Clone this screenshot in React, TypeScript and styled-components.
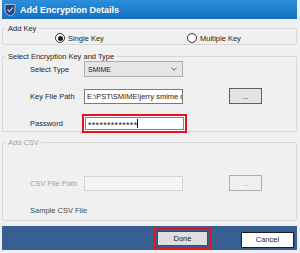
import React from 'react';
import styled, { createGlobalStyle } from 'styled-components';

const GlobalStyle = createGlobalStyle`
  html, body {
    margin: 0;
    padding: 0;
    background: #ececec;
  }
  * {
    box-sizing: border-box;
  }
`;

const Window = styled.div`
  width: 300px;
  height: 253px;
  padding: 0 3px 2px 2px;
  background: #f0f0f0;
  display: flex;
  flex-direction: column;
  font-family: 'Liberation Sans', Arial, sans-serif;
  font-size: 7.5px;
  color: #1e1e1e;
  overflow: hidden;
`;

const TitleBar = styled.div`
  flex: none;
  height: 19px;
  display: flex;
  align-items: center;
  gap: 4px;
  padding-left: 2px;
  background: linear-gradient(to bottom, #2b8fdb, #1670c0);
  color: #ffffff;
  font-size: 9px;
  font-weight: bold;
`;

const Body = styled.div`
  flex: 1;
  display: flex;
  flex-direction: column;
`;

const Group = styled.fieldset<{ $top: number; $bottomPad: number }>`
  flex: none;
  margin: ${(p) => p.$top}px 0 0 0;
  padding: 0 0 ${(p) => p.$bottomPad}px 0;
  min-width: 0;
  border: 1px solid #d8d8d8;
  border-radius: 2px;
`;

const Legend = styled.legend<{ $disabled?: boolean }>`
  padding: 0 2px;
  margin-left: 3px;
  line-height: 9px;
  height: 9px;
  color: ${(p) => (p.$disabled ? '#a3a3a3' : '#1e1e1e')};
`;

const RadioRow = styled.div`
  display: grid;
  grid-template-columns: 132px 1fr;
  padding: 0 0 0 52px;
  height: 9px;
  align-items: center;
`;

const RadioItem = styled.label`
  display: flex;
  align-items: center;
  gap: 3px;
`;

const RadioCircle = styled.span<{ $checked?: boolean }>`
  width: 10px;
  height: 10px;
  border-radius: 50%;
  border: 1px solid #333333;
  background: #ffffff;
  display: flex;
  align-items: center;
  justify-content: center;

  &::after {
    content: '';
    width: 5px;
    height: 5px;
    border-radius: 50%;
    background: ${(p) => (p.$checked ? '#1a1a1a' : 'transparent')};
  }
`;

const FormGrid = styled.div<{ $padTop: number }>`
  display: grid;
  grid-template-columns: 54px 99px 46px 33px;
  grid-auto-rows: 16px;
  row-gap: 11px;
  align-items: center;
  padding: ${(p) => p.$padTop}px 0 0 27px;
`;

const FieldLabel = styled.span<{ $muted?: 'disabled' | 'soft' }>`
  color: ${(p) =>
    p.$muted === 'disabled' ? '#a3a3a3' : p.$muted === 'soft' ? '#4a4a4a' : '#1e1e1e'};
  white-space: nowrap;
`;

const Combo = styled.div`
  height: 16px;
  display: flex;
  align-items: center;
  justify-content: space-between;
  padding: 0 5px 0 3px;
  background: #e5e5e5;
  border: 1px solid #adadad;
  font-size: 7px;
  color: #222222;
`;

const TextBox = styled.div<{ $disabled?: boolean }>`
  height: 15px;
  display: flex;
  align-items: center;
  padding: 0 2px;
  overflow: hidden;
  white-space: nowrap;
  background: ${(p) => (p.$disabled ? '#f4f4f4' : '#ffffff')};
  border: 1px solid ${(p) => (p.$disabled ? '#d4d4d4' : '#7a7a7a')};
  font-size: 7.5px;
`;

const Highlight = styled.div`
  margin-left: -2px;
  margin-right: -4px;
  height: 19px;
  padding: 1px;
  border: 2px solid #e3121c;
  background: #ffffff;
  display: flex;
`;

const FocusBox = styled.div`
  flex: 1;
  display: flex;
  align-items: center;
  padding: 3px 2px 0;
  border: 1px solid #4a90d9;
  font-size: 9px;
  letter-spacing: 0.3px;
  color: #222222;
`;

const Caret = styled.span`
  display: inline-block;
  width: 1px;
  height: 9px;
  margin: -3px 0 0 0;
  background: #111111;
`;

const SmallButton = styled.div<{ $disabled?: boolean }>`
  grid-column: 4;
  height: 16px;
  display: flex;
  align-items: center;
  justify-content: center;
  background: ${(p) => (p.$disabled ? '#efefef' : '#e3e3e3')};
  border: 1px solid ${(p) => (p.$disabled ? '#adadad' : '#5c5c5c')};
  color: ${(p) => (p.$disabled ? '#a8a8a8' : '#222222')};
  font-size: 7px;
`;

const Footer = styled.div`
  flex: none;
  margin-top: 5px;
  height: 24px;
  background: #385f91;
  display: flex;
  align-items: center;
  padding: 0 3px 0 152px;
`;

const DoneFrame = styled.div`
  width: 57px;
  height: 21px;
  padding: 1px;
  border: 2px solid #e3121c;
`;

const DialogButton = styled.div<{ $variant: 'done' | 'cancel' }>`
  width: ${(p) => (p.$variant === 'done' ? '100%' : '53px')};
  height: ${(p) => (p.$variant === 'done' ? '100%' : '16px')};
  margin-left: ${(p) => (p.$variant === 'cancel' ? 'auto' : '0')};
  margin-top: ${(p) => (p.$variant === 'cancel' ? '3px' : '0')};
  display: flex;
  align-items: center;
  justify-content: center;
  background: ${(p) => (p.$variant === 'done' ? '#dedede' : '#fdfdfd')};
  border: 1px solid ${(p) => (p.$variant === 'done' ? '#4a4a4a' : '#1c1c1c')};
  color: #1a1a1a;
  font-size: 7.5px;
`;

const AppIcon = () => (
  <svg width="12" height="14" viewBox="0 0 12 14">
    <path d="M1 1.5 L11 1.5 L11 7 C11 10 8.5 12 6 13 C3.5 12 1 10 1 7 Z" fill="#2a3f73" stroke="#c9d6ec" strokeWidth="0.8" />
    <path d="M3.5 6.5 L5.5 8.5 L9 4.5" fill="none" stroke="#9fc3ef" strokeWidth="1.3" />
  </svg>
);

const Chevron = () => (
  <svg width="6" height="4" viewBox="0 0 6 4">
    <path d="M0.5 0.8 L3 3.2 L5.5 0.8" fill="none" stroke="#555555" strokeWidth="0.9" />
  </svg>
);

export default function App() {
  return (
    <>
      <GlobalStyle />
      <Window>
        <TitleBar>
          <AppIcon />
          <span>Add Encryption Details</span>
        </TitleBar>
        <Body>
          <Group $top={5} $bottomPad={2}>
            <Legend>Add Key</Legend>
            <RadioRow>
              <RadioItem>
                <RadioCircle $checked />
                Single Key
              </RadioItem>
              <RadioItem>
                <RadioCircle />
                Multiple Key
              </RadioItem>
            </RadioRow>
          </Group>

          <Group $top={7} $bottomPad={0}>
            <Legend>Select Encryption Key and Type</Legend>
            <FormGrid $padTop={0}>
              <FieldLabel>Select Type</FieldLabel>
              <Combo>
                SMIME
                <Chevron />
              </Combo>
              <span />
              <span />

              <FieldLabel>Key File Path</FieldLabel>
              <TextBox>E:\PST\SMIME\jerry smime new.pfx</TextBox>
              <span />
              <SmallButton>...</SmallButton>

              <FieldLabel>Password</FieldLabel>
              <Highlight>
                <FocusBox>
                  *************
                  <Caret />
                </FocusBox>
              </Highlight>
            </FormGrid>
          </Group>

          <Group $top={6} $bottomPad={2} disabled>
            <Legend $disabled>Add CSV</Legend>
            <FormGrid $padTop={28}>
              <FieldLabel $muted="disabled">CSV File Path</FieldLabel>
              <TextBox $disabled />
              <span />
              <SmallButton $disabled>...</SmallButton>

              <FieldLabel $muted="soft">Sample CSV File</FieldLabel>
            </FormGrid>
          </Group>

          <Footer>
            <DoneFrame>
              <DialogButton $variant="done">Done</DialogButton>
            </DoneFrame>
            <DialogButton $variant="cancel">Cancel</DialogButton>
          </Footer>
        </Body>
      </Window>
    </>
  );
}
